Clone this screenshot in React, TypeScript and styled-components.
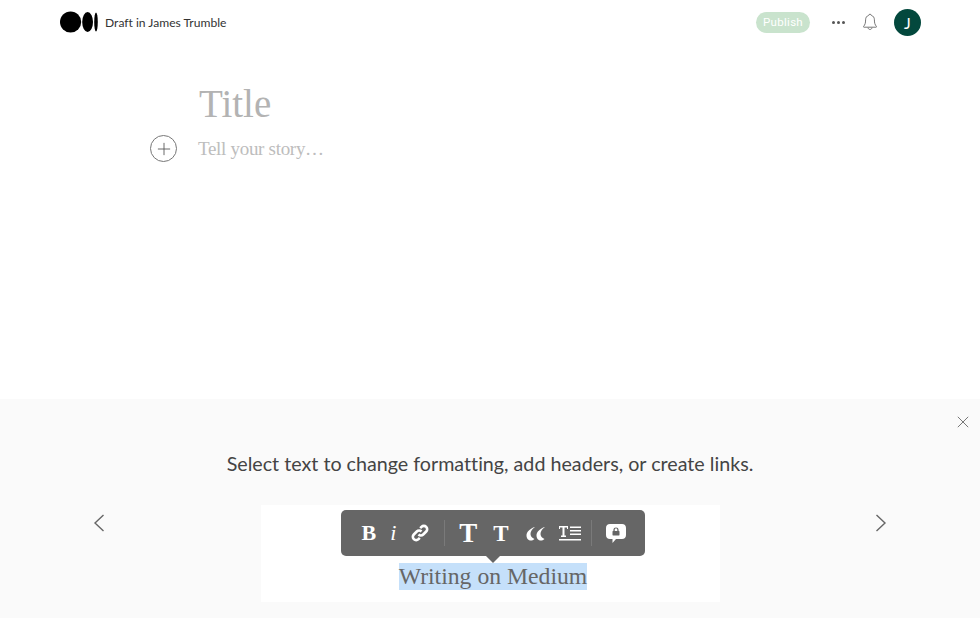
import React from 'react';
import styled, { createGlobalStyle } from 'styled-components';

const GlobalStyle = createGlobalStyle`
  html, body {
    margin: 0;
    height: 100%;
    background: #fff;
    font-family: "Lato", "Liberation Sans", sans-serif;
    font-variant-ligatures: none;
    overflow: hidden;
  }
`

const App = () => {
  return (
    <Page>
      <GlobalStyle />
      <Header>
        <Brand>
          <Logo viewBox="0 0 38 22">
            <ellipse cx="10.6" cy="11" rx="10.6" ry="10.6" fill="#000" />
            <ellipse cx="27.6" cy="11" rx="5.4" ry="10" fill="#000" />
            <ellipse cx="36" cy="11" rx="1.8" ry="9.4" fill="#000" />
          </Logo>
          <DraftLabel>Draft in James Trumble</DraftLabel>
        </Brand>
        <Actions>
          <PublishButton>Publish</PublishButton>
          <Dots>
            <Dot /><Dot /><Dot />
          </Dots>
          <BellIcon viewBox="0 0 16 18" fill="none" stroke="#777" strokeWidth="1">
            <path d="M8 1.2c-.8 0-1.3.5-1.3 1.2C4.6 3 3.6 4.700 3.600 6.800c0 3.200-.5 4.900-2.100 6.700-.2.3 0 .7.300.7h12.400c.3 0 .5-.4.300-.7-1.600-1.800-2.100-3.500-2.100-6.700 0-2.100-1-3.800-3.100-4.400C9.300 1.700 8.800 1.200 8 1.200z" />
            <path d="M6 14.600c.2 1.200 1 1.900 2 1.900s1.800-.7 2-1.900" />
          </BellIcon>
          <Avatar>J</Avatar>
        </Actions>
      </Header>

      <Editor>
        <TitleRow>Title</TitleRow>
        <StoryRow>
          <AddButton>
            <svg viewBox="0 0 16 16" width="14" height="14" fill="none" stroke="#555" strokeWidth="1">
              <path d="M8 1v14M1 8h14" />
            </svg>
          </AddButton>
          <StoryText>Tell your story…</StoryText>
        </StoryRow>
      </Editor>

      <Tutorial>
        <CloseIcon viewBox="0 0 12 12" fill="none" stroke="#777" strokeWidth="1">
          <path d="M.8.8l10.400 10.400M11.200.8L.8 11.200" />
        </CloseIcon>
        <TutorialTitle>Select text to change formatting, add headers, or create links.</TutorialTitle>
        <Carousel>
          <Chevron viewBox="0 0 12 18" fill="none" stroke="#666" strokeWidth="1.400">
            <path d="M10.500 1L2 9l8.500 8" />
          </Chevron>
          <Demo>
            <Toolbar>
              <ToolGlyph $size={22} $weight={700}>B</ToolGlyph>
              <ToolGlyph $size={22} $italic>i</ToolGlyph>
              <ToolIcon viewBox="0 0 20 20" width="20" height="20" fill="none" stroke="#fff" strokeWidth="2.600">
                <path d="M8.500 11.500a3.300 3.300 0 0 0 4.700 0l3-3a3.300 3.300 0 0 0-4.700-4.700l-1.300 1.300" />
                <path d="M11.500 8.500a3.300 3.300 0 0 0-4.700 0l-3 3a3.300 3.300 0 0 0 4.700 4.700l1.300-1.300" />
              </ToolIcon>
              <ToolDivider />
              <ToolGlyph $size={27} $weight={700}>T</ToolGlyph>
              <ToolGlyph $size={23} $weight={700} $left={2}>T</ToolGlyph>
              <ToolIcon viewBox="0 0 19 15" width="19" height="15" fill="#fff" $left={3}>
                <path d="M8.500 1C3.500 3 .5 6 .5 9.500c0 3 2 5 4.500 5 1.500 0 2.800-.6 3.500-1.500C6 12 4.500 10 4.500 8c0-2.500 1.500-5 4-6.500zM18.500 1c-5 2-8 5-8 8.500 0 3 2 5 4.500 5 1.500 0 2.800-.6 3.500-1.500-2.500-1-4-3-4-5 0-2.500 1.500-5 4-6.500z" />
              </ToolIcon>
              <ToolIcon viewBox="0 0 22 16" width="22" height="16" fill="#fff" $right={-4}>
                <path d="M0 1h9v3H8V2.600H5.500v8H7V12H2v-1.400h1.500v-8H1V4H0zM11 1.500h11V3H11zM11 5h11v1.500H11zM11 8.500h11V10H11zM0 14h22v1.500H0z" />
              </ToolIcon>
              <ToolDivider />
              <ToolIcon viewBox="0 0 22 21" width="22" height="21" $left={-1}>
                <path fill="#fff" d="M5 1h12c2.500 0 4 1.500 4 4v7c0 2.500-1.500 4-4 4h-6l-3.500 4v-4H5c-2.500 0-4-1.500-4-4V5c0-2.500 1.500-4 4-4z" />
                <path fill="#666" d="M7.500 11.800V8.600c0-.4.200-.6.500-.6h.4V6.900C8.400 5.200 9.500 4.400 11 4.400s2.600.8 2.600 2.500V8h.4c.3 0 .5.200.5.600v3.200c0 .4-.2.600-.5.600H8c-.3 0-.5-.2-.5-.6zM9.700 8h2.600V6.900c0-.9-.5-1.300-1.300-1.300s-1.300.4-1.300 1.300z" />
              </ToolIcon>
              <ToolbarArrow />
            </Toolbar>
            <DemoText>Writing on Medium</DemoText>
          </Demo>
          <Chevron viewBox="0 0 12 18" fill="none" stroke="#666" strokeWidth="1.400">
            <path d="M1.500 1L10 9l-8.500 8" />
          </Chevron>
        </Carousel>
      </Tutorial>
    </Page>
  )
}

export default App

const Page = styled.div`
  display: flex;
  flex-direction: column;
  width: 980px;
  height: 618px;
  overflow: hidden;
`
const Header = styled.header`
  display: flex;
  align-items: center;
  justify-content: space-between;
  height: 44px;
  padding: 0 59px 0 60px;
  flex: none;
`
const Brand = styled.div`
  display: flex;
  align-items: center;
  gap: 7px;
`
const Logo = styled.svg`
  width: 38px;
  height: 22px;
`
const DraftLabel = styled.span`
  font-size: 12.1px;
  color: #333;
`
const Actions = styled.div`
  display: flex;
  align-items: center;
`
const PublishButton = styled.div`
  width: 54px;
  height: 21px;
  border-radius: 11px;
  background: #c9e3cd;
  color: #fff;
  font-family: "Roboto", "Liberation Sans", sans-serif;
  font-size: 11.5px;
  line-height: 21px;
  text-align: center;
  letter-spacing: 0.3px;
`
const Dots = styled.div`
  display: flex;
  gap: 2px;
  margin-left: 22px;
`
const Dot = styled.span`
  width: 3px;
  height: 3px;
  border-radius: 50%;
  background: #555;
`
const BellIcon = styled.svg`
  width: 16px;
  height: 18px;
  margin-left: 17px;
`
const Avatar = styled.div`
  width: 27px;
  height: 27px;
  margin-left: 16px;
  border-radius: 50%;
  background: #03483d;
  color: #fff;
  font-size: 16px;
  line-height: 27px;
  text-align: center;
`
const Editor = styled.main`
  flex: 1;
  padding: 36px 0 0 150px;
`
const TitleRow = styled.h1`
  margin: 0 0 0 49px;
  font-family: "Liberation Serif", serif;
  font-size: 39px;
  font-weight: 400;
  line-height: 48px;
  color: #b3b3b3;
`
const StoryRow = styled.div`
  display: flex;
  align-items: center;
  gap: 21px;
  margin-top: 7px;
`
const AddButton = styled.div`
  display: flex;
  align-items: center;
  justify-content: center;
  width: 27px;
  height: 27px;
  box-sizing: border-box;
  border: 1px solid #777;
  border-radius: 50%;
`
const StoryText = styled.span`
  font-family: "Liberation Serif", serif;
  font-size: 19px;
  letter-spacing: -0.3px;
  color: #bdbdbd;
`
const Tutorial = styled.section`
  position: relative;
  flex: none;
  height: 219px;
  background: #fafafa;
  box-sizing: border-box;
  padding-top: 51px;
`
const CloseIcon = styled.svg`
  position: absolute;
  top: 17px;
  right: 11px;
  width: 12px;
  height: 12px;
`
const TutorialTitle = styled.h2`
  margin: 0;
  font-size: 19.700px;
  font-weight: 400;
  line-height: 28px;
  color: #444;
  text-align: center;
`
const Carousel = styled.div`
  display: flex;
  justify-content: space-between;
  align-items: center;
  width: 794px;
  margin: 27px 0 0 93px;
`
const Chevron = styled.svg`
  width: 12px;
  height: 18px;
  margin-top: -62px;
`
const Demo = styled.div`
  position: relative;
  display: flex;
  align-items: flex-end;
  justify-content: center;
  width: 459px;
  height: 97px;
  background: #fff;
`
const Toolbar = styled.div`
  position: absolute;
  top: 5px;
  left: 80px;
  display: flex;
  align-items: center;
  box-sizing: border-box;
  width: 304px;
  height: 46px;
  padding: 0 0 0 21px;
  gap: 14px;
  border-radius: 5px;
  background: #666;
`
const ToolGlyph = styled.span<{ $size: number; $weight?: number; $italic?: boolean; $left?: number }>`
  margin-left: ${p => p.$left ?? 0}px;
  font-family: "Liberation Serif", serif;
  font-size: ${p => p.$size}px;
  font-weight: ${p => p.$weight ?? 400};
  font-style: ${p => (p.$italic ? 'italic' : 'normal')};
  color: #fff;
  line-height: 1;
`
const ToolIcon = styled.svg<{ $left?: number; $right?: number }>`
  flex: none;
  margin-left: ${p => p.$left ?? 0}px;
  margin-right: ${p => p.$right ?? 0}px;
`
const ToolDivider = styled.span`
  flex: none;
  width: 1px;
  height: 26px;
  background: #7a7a7a;
`
const ToolbarArrow = styled.span`
  position: absolute;
  left: 145px;
  bottom: -7px;
  width: 0;
  height: 0;
  border-left: 7px solid transparent;
  border-right: 7px solid transparent;
  border-top: 7px solid #666;
`
const DemoText = styled.span`
  margin: 0 0 12px 6px;
  font-family: "Liberation Serif", serif;
  font-size: 23.700px;
  line-height: 27px;
  color: #666;
  background: #c5e0fa;
`
